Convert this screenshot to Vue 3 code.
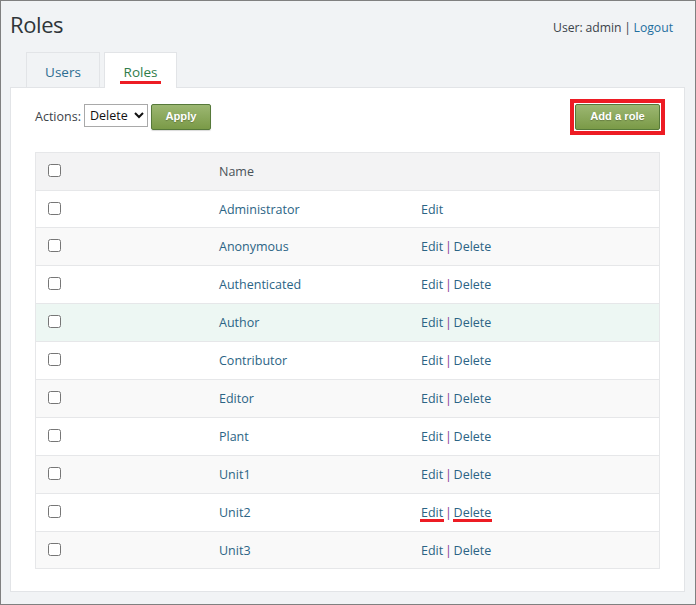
<template>
  <div class="page">
    <div class="top">
      <h1>Roles</h1>
      <div class="user">User: admin | <a>Logout</a></div>
    </div>

    <div class="tabs">
      <div class="tab">Users</div>
      <div class="tab active"><span class="marked">Roles</span></div>
    </div>

    <div class="card">
      <div class="toolbar">
        <div class="actions">
          <label>Actions:</label>
          <select>
            <option>Delete</option>
          </select>
          <button class="btn">Apply</button>
        </div>
        <div class="highlight">
          <button class="btn add">Add a role</button>
        </div>
      </div>

      <table>
        <thead>
          <tr>
            <th class="col-check"><input type="checkbox" /></th>
            <th class="col-name">Name</th>
            <th></th>
          </tr>
        </thead>
        <tbody>
          <tr v-for="role in roles" :key="role.name" :class="{ hover: role.name === 'Author' }">
            <td class="col-check"><input type="checkbox" /></td>
            <td class="col-name"><a>{{ role.name }}</a></td>
            <td>
              <a :class="{ marked: role.marked }">Edit</a>
              <template v-if="role.name !== 'Administrator'">
                | <a :class="{ marked: role.marked }">Delete</a>
              </template>
            </td>
          </tr>
        </tbody>
      </table>
    </div>
  </div>
</template>

<script setup>
const roles = [
  { name: 'Administrator' },
  { name: 'Anonymous' },
  { name: 'Authenticated' },
  { name: 'Author' },
  { name: 'Contributor' },
  { name: 'Editor' },
  { name: 'Plant' },
  { name: 'Unit1' },
  { name: 'Unit2', marked: true },
  { name: 'Unit3' },
]
</script>

<style>
html,
body {
  margin: 0;
  background: #f1f2f4;
}
</style>

<style scoped>
.page {
  box-sizing: border-box;
  width: 696px;
  height: 605px;
  padding: 0 9px;
  background: #f1f3f5;
  border: 1px solid #808080;
  font-family: "Open Sans", "Noto Sans", sans-serif;
  font-size: 12.5px;
  color: #3c434a;
  overflow: hidden;
}

a {
  color: #2b6485;
}

.top {
  display: flex;
  justify-content: space-between;
  height: 51px;
}

h1 {
  margin: 8px 0 0;
  font-size: 22px;
  font-weight: 400;
  letter-spacing: -0.4px;
  line-height: 30px;
  color: #2f3539;
}

.user {
  margin: 18px 13px 0 0;
  font-size: 12.2px;
  line-height: 18px;
  word-spacing: -0.5px;
}

.user a {
  color: #1f6f9f;
}

.tabs {
  display: flex;
  gap: 4px;
  padding-left: 16px;
  height: 36px;
  margin-bottom: -1px;
}

.tab {
  box-sizing: border-box;
  width: 74px;
  height: 36px;
  border: 1px solid #e2e4e7;
  border-bottom: none;
  text-align: center;
  font-size: 13.5px;
  line-height: 38px;
  color: #2d6d92;
}

.tab.active {
  position: relative;
  width: 73px;
  background: #fff;
  color: #2f7d4a;
}

.tab .marked {
  line-height: 18px;
  padding: 0 4px;
  margin: 0;
}

.card {
  box-sizing: border-box;
  height: 505px;
  width: 675px;
  padding: 16px 24px 0;
  background: #fff;
  border: 1px solid #e2e4e7;
}

.toolbar {
  display: flex;
  justify-content: space-between;
  align-items: flex-start;
  height: 48px;
}

.actions {
  display: flex;
  align-items: flex-start;
  gap: 3px;
}

label {
  line-height: 25px;
}

select {
  height: 23px;
  width: 64px;
  padding: 0 1px;
  background: #fff;
  border: 1px solid #a9a9a9;
  border-radius: 0;
  font-family: inherit;
  font-size: 12.5px;
  color: #111;
}

.btn {
  height: 26px;
  width: 60px;
  padding: 0 0 2px;
  border: 1px solid #56793a;
  border-radius: 2px;
  background: linear-gradient(#9cb772, #7a9a47);
  box-shadow: 0 1px 1px rgba(0, 0, 0, 0.15);
  font-family: "Liberation Sans", Arial, sans-serif;
  font-size: 11.2px;
  font-weight: 700;
  color: #fff;
  text-shadow: 0 1px 1px rgba(0, 0, 0, 0.25);
}

.highlight {
  display: flex;
  margin: -5px -5px 0 0;
  padding: 1px;
  border: 4px solid #ed1c24;
}

.btn.add {
  width: 85px;
  box-shadow: none;
}

table {
  width: 625px;
  border-collapse: collapse;
  table-layout: fixed;
  border-left: 1px solid #e6e7e9;
  border-right: 1px solid #e6e7e9;
}

th,
td {
  height: 37px;
  padding: 0 12px;
  border: 1px solid #e6e7e9;
  border-left: none;
  border-right: none;
  text-align: left;
  font-weight: 400;
}

td {
  color: #8a3a94;
  word-spacing: -1.5px;
}

tbody tr:first-child td,
tbody tr:last-child td {
  height: 36px;
}

th {
  background: #f3f3f4;
  color: #4a5258;
}

tbody tr:nth-child(even) td {
  background: #f9f9f9;
}

tbody tr.hover td {
  background: #edf7f3;
}

.col-check {
  width: 147px;
}

.col-check input {
  display: block;
  width: 13px;
  height: 13px;
  margin: 0 0 2px;
}

.col-name {
  width: 178px;
}

.marked {
  display: inline-block;
  line-height: 13px;
  margin: 0 -1px;
  padding: 0 1px;
  border-bottom: 3px solid #ed1c24;
}
</style>
